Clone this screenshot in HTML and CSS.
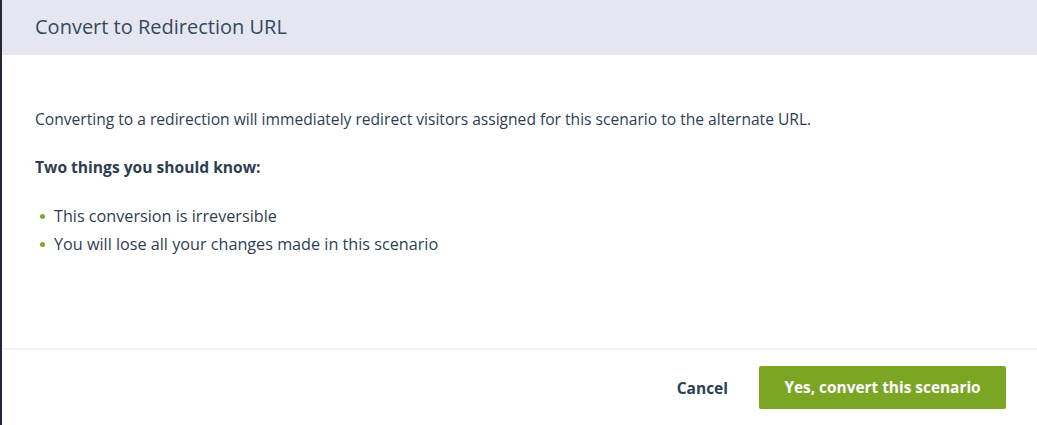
FILE: index.html
```html
<!DOCTYPE html>
<html>
<head>
<meta charset="utf-8">
<link rel="stylesheet" href="styles.css">
</head>
<body>
<div class="modal">
  <div class="modal-header">
    <h2 class="modal-title">Convert to Redirection URL</h2>
  </div>
  <div class="modal-body">
    <p class="lead">Converting to a redirection will immediately redirect visitors assigned for this scenario to the alternate URL.</p>
    <p class="subhead">Two things you should know:</p>
    <ul class="points">
      <li>This conversion is irreversible</li>
      <li>You will lose all your changes made in this scenario</li>
    </ul>
  </div>
  <div class="modal-footer">
    <button class="btn-cancel">Cancel</button>
    <button class="btn-primary">Yes, convert this scenario</button>
  </div>
</div>
</body>
</html>
```
FILE: styles.css
```css
html, body {
  margin: 0;
  padding: 0;
  background: #ffffff;
}
body {
  font-family: "Open Sans", Lato, sans-serif;
  color: #2c3e50;
}
.modal {
  width: 1037px;
  height: 425px;
  box-sizing: border-box;
  border-left: 2px solid #1f2833;
  display: flex;
  flex-direction: column;
}
.modal-header {
  height: 55px;
  box-sizing: border-box;
  background: #e6e6f0;
  display: flex;
  align-items: center;
  padding: 0 0 2px 33px;
}
.modal-title {
  margin: 0;
  font-size: 20px;
  font-weight: 400;
  color: #34495e;
}
.modal-body {
  flex: 1;
  padding: 54px 33px 0;
  font-size: 15.6px;
  color: #2e3e52;
}
.lead {
  margin: 0;
  line-height: 20px;
}
.subhead {
  margin: 28px 0 0;
  font-weight: 700;
  line-height: 20px;
}
.points {
  list-style: none;
  margin: 25px 0 0;
  padding: 0;
  font-size: 16.2px;
}
.points li {
  position: relative;
  padding-left: 19px;
  line-height: 28px;
}
.points li::before {
  content: "";
  position: absolute;
  left: 5px;
  top: 12px;
  width: 5px;
  height: 5px;
  border-radius: 50%;
  background: #7da928;
}
.modal-footer {
  border-top: 2px solid #f1f1f6;
  height: 75px;
  display: flex;
  align-items: center;
  justify-content: flex-end;
  padding-right: 31px;
  gap: 31px;
}
.btn-cancel {
  border: 0;
  background: none;
  font-family: inherit;
  font-size: 15.5px;
  font-weight: 700;
  color: #2e3e52;
  padding: 0;
  cursor: pointer;
}
.btn-primary {
  border: 0;
  border-radius: 2px;
  background: #7ba624;
  color: #ffffff;
  font-family: inherit;
  font-size: 15.4px;
  font-weight: 700;
  width: 247px;
  height: 43px;
  cursor: pointer;
}
```
